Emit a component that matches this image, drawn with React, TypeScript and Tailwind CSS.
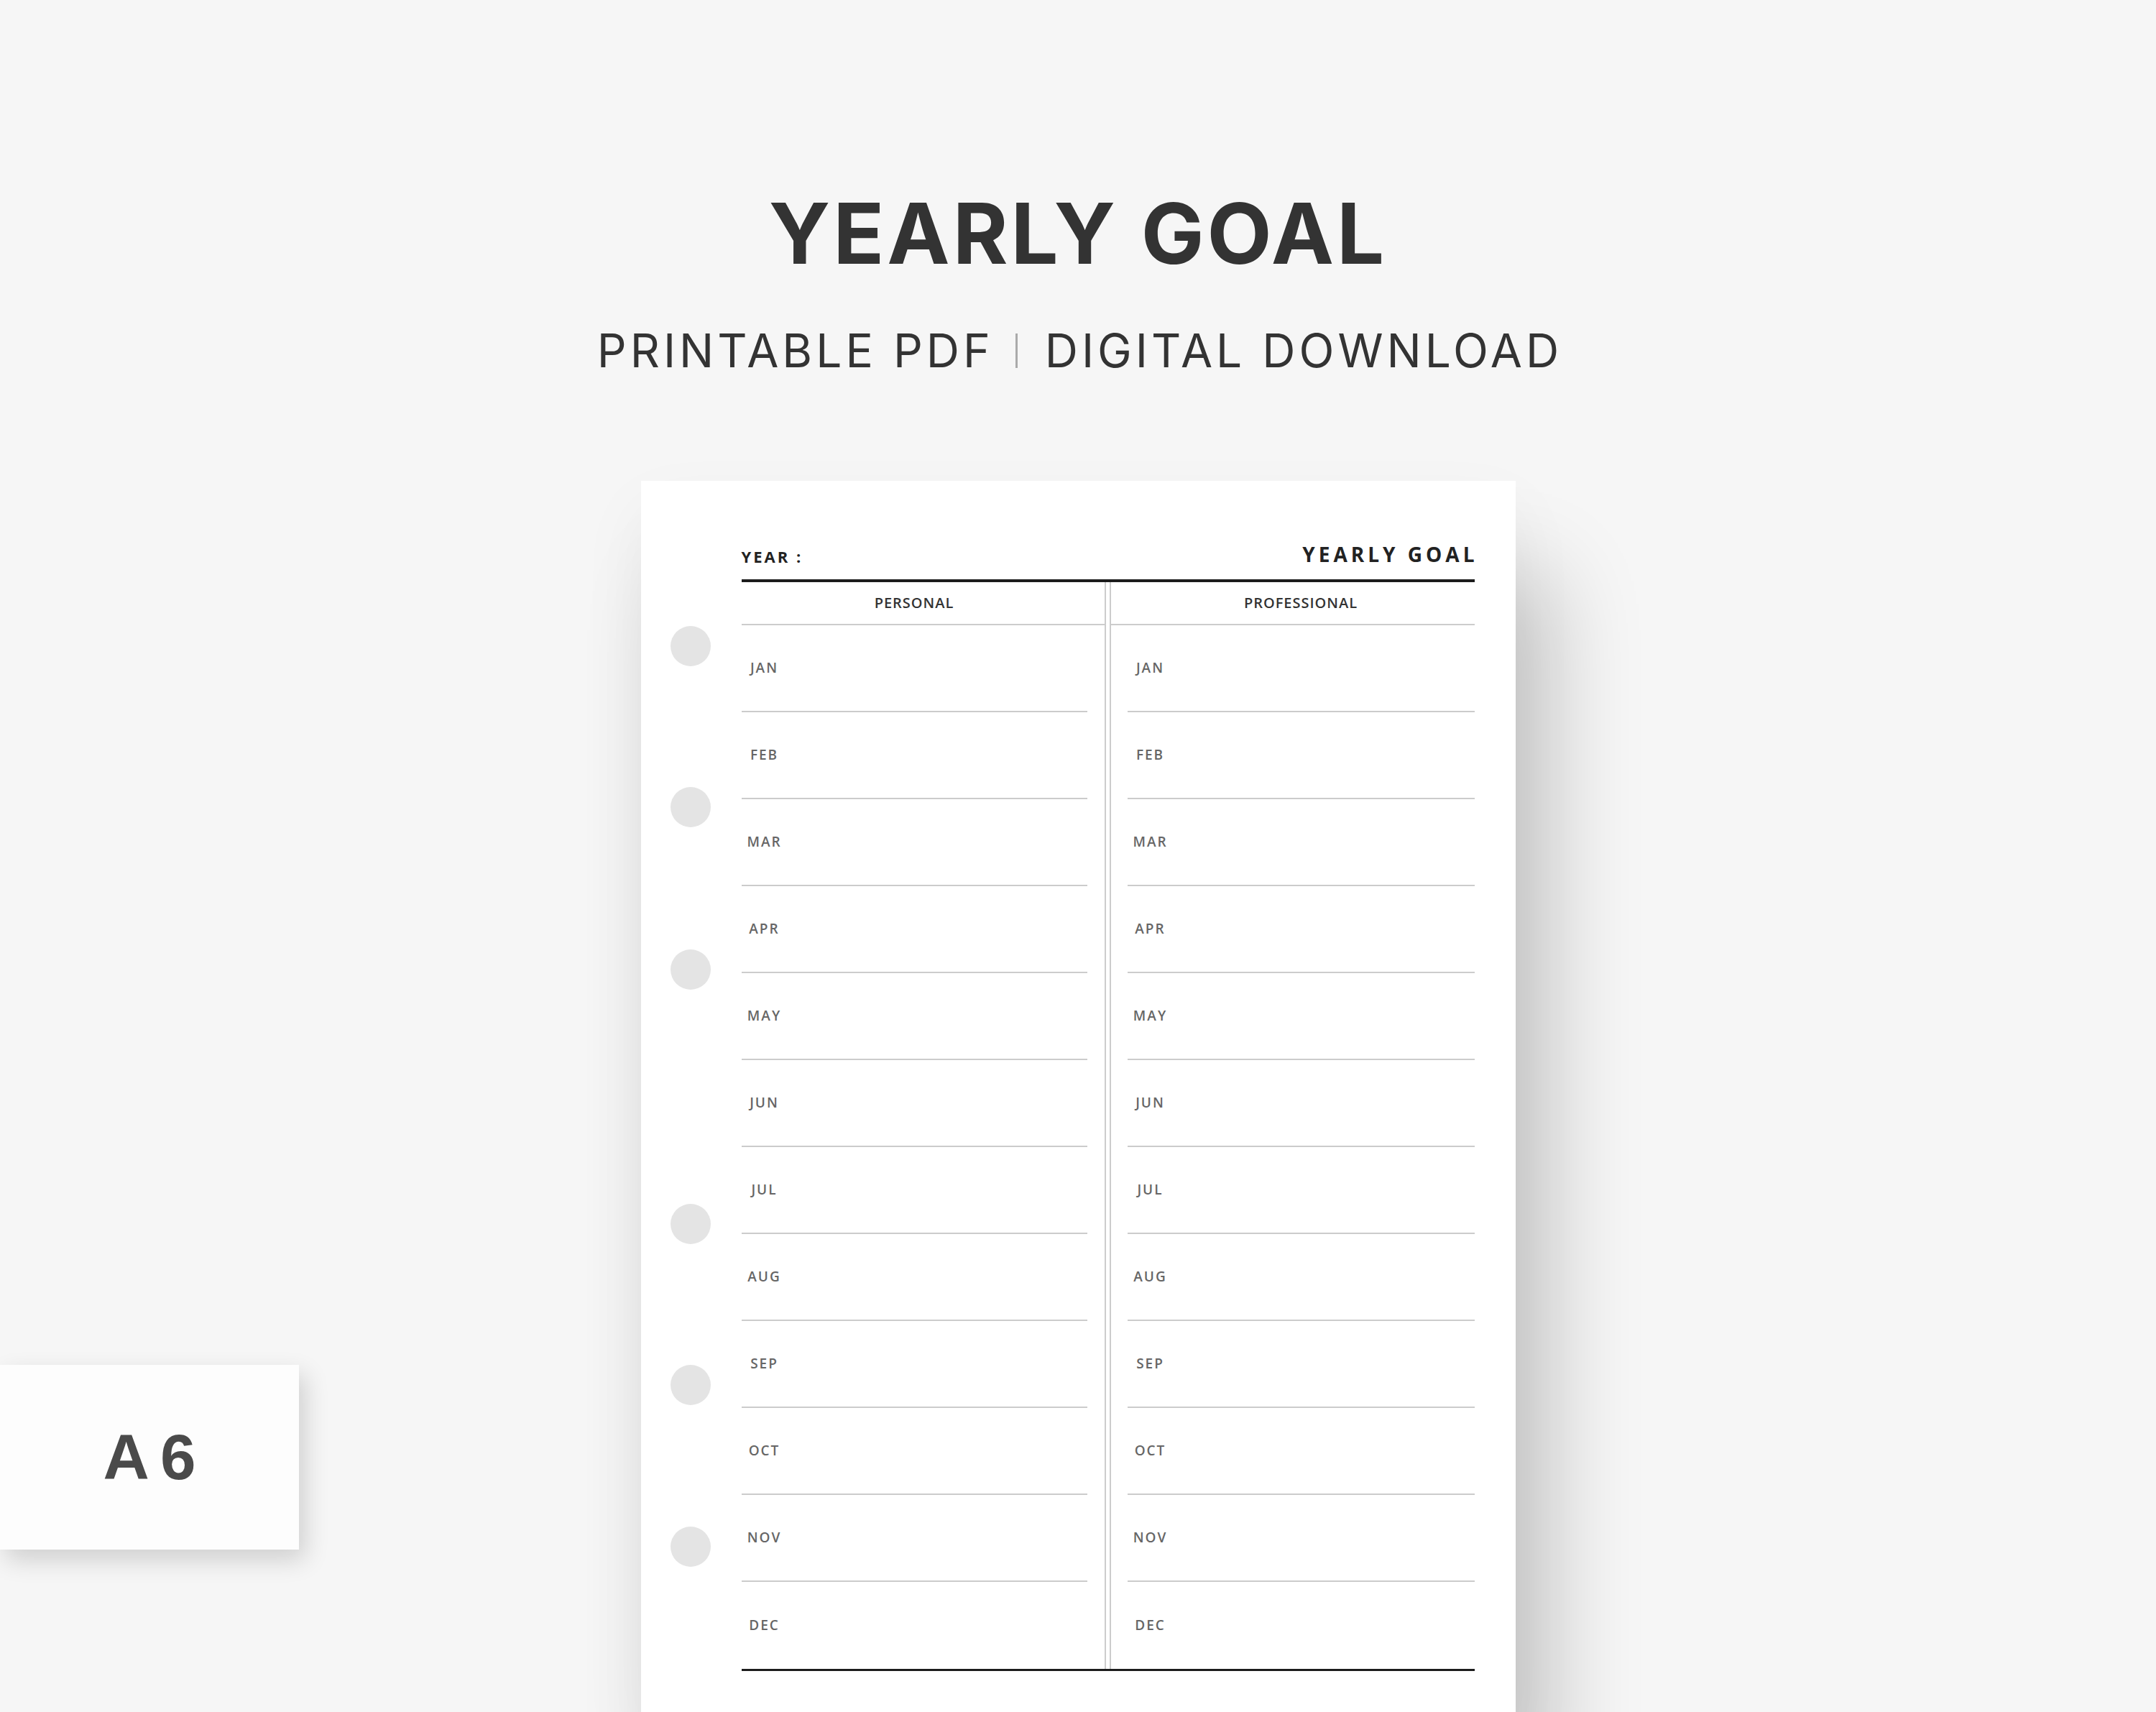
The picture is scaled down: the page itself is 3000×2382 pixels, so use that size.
import React from 'react'

const MONTHS = ['JAN', 'FEB', 'MAR', 'APR', 'MAY', 'JUN', 'JUL', 'AUG', 'SEP', 'OCT', 'NOV', 'DEC']

// gaps between the ring holes, top to top minus the hole
const HOLE_MARGINS = ['mt-0', 'mt-[168px]', 'mt-[170px]', 'mt-[298px]', 'mt-[168px]', 'mt-[169px]']

function MonthColumn({ title, side }: { title: string; side: 'left' | 'right' }) {
  const inset = side === 'left' ? 'mr-[24px]' : 'ml-[23px]'
  return (
    <div className={side === 'left' ? 'flex w-[505px] flex-col' : 'flex w-[506px] flex-col'}>
      {/* cabecera de columna */}
      <div className="flex h-[60px] items-center border-b-2 border-[#cccccc]">
        <div className={`${inset} flex-1 text-center text-[20px] font-semibold leading-none tracking-[1px] text-[#333333]`}>
          {title}
        </div>
      </div>
      {MONTHS.map((m, i) => (
        <div
          key={m}
          className={
            i === MONTHS.length - 1
              ? `${inset} flex h-[121px] items-center`
              : `${inset} flex h-[121px] items-center border-b-2 border-[#cccccc]`
          }
        >
          <span className="w-[62px] pl-[2px] text-center text-[19px] font-semibold leading-none tracking-[2px] text-[#666666]">
            {m}
          </span>
        </div>
      ))}
    </div>
  )
}

export default function App() {
  return (
    <div className="relative h-[2382px] w-full overflow-hidden bg-[#f6f6f6] font-['Inter',sans-serif]">
      <div className="flex flex-col items-center pt-[266px]">
        <h1 className="text-[117px] font-bold leading-none tracking-[4px] text-[#333333]">YEARLY GOAL</h1>
        <div className="mt-[73px] flex items-center text-[64px] font-normal leading-none tracking-[5px] text-[#333333]">
          <span>PRINTABLE PDF</span>
          <span className="ml-[30px] mr-[38px] h-[48px] w-[3px] bg-[#aaaaaa]" />
          <span className="mr-[-5px]">DIGITAL DOWNLOAD</span>
        </div>

        {/* hoja A6 */}
        <div className="mt-[149px] flex h-[1713px] w-[1217px] bg-white font-['Open_Sans',sans-serif] shadow-[50px_130px_120px_rgba(0,0,0,0.2),0_40px_90px_rgba(0,0,0,0.05)]">
          <div className="flex w-[140px] flex-col pl-[41px] pt-[202px]">
            {HOLE_MARGINS.map((mt, i) => (
              <div key={i} className={`${mt} h-[56px] w-[56px] rounded-full bg-[#e4e4e4]`} />
            ))}
          </div>

          <div className="flex w-[1020px] flex-col">
            <div className="flex h-[137px] items-end justify-between pb-[21px]">
              <span className="text-[22px] font-bold leading-none tracking-[3px] text-[#222222]">YEAR :</span>
              <span className="mr-[-5px] text-[28px] font-bold leading-none tracking-[5px] text-[#222222]">
                YEARLY GOAL
              </span>
            </div>
            <div className="h-[4px] bg-[#1c1c1c]" />
            <div className="flex">
              <MonthColumn title="PERSONAL" side="left" />
              <div className="w-[9px] border-x-2 border-[#cccccc]" />
              <MonthColumn title="PROFESSIONAL" side="right" />
            </div>
            <div className="h-[3px] bg-[#1c1c1c]" />
          </div>
        </div>
      </div>

      {/* etiqueta de tamaño */}
      <div className="absolute left-0 top-[1899px] flex h-[257px] w-[416px] items-center justify-center bg-[#fdfdfd] pl-[15px] shadow-[8px_14px_32px_rgba(0,0,0,0.16)]">
        <span className="font-['Liberation_Sans',sans-serif] text-[89px] font-bold leading-none tracking-[15px] text-[#4a4a4a]">
          A6
        </span>
      </div>
    </div>
  )
}
